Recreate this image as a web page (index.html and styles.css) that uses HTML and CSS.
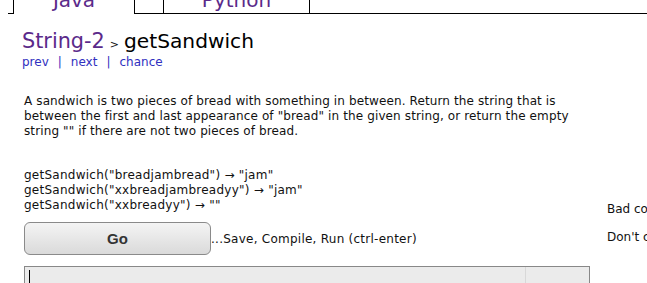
FILE: index.html
```html
<!DOCTYPE html>
<html>
<head>
<meta charset="utf-8">
<link rel="stylesheet" href="styles.css">
</head>
<body>
<div class="tabs">
  <div class="tab-edge"></div>
  <div class="tab active">Java</div>
  <div class="tab gap"></div>
  <div class="tab py">Python</div>
  <div class="tab rest"></div>
</div>
<div class="page">
  <div class="main">
    <div class="title"><span class="cat">String-2</span><span class="sep">&gt;</span><span class="name">getSandwich</span></div>
    <div class="nav"><a>prev</a><span class="bar">|</span><a>next</a><span class="bar">|</span><a>chance</a></div>
    <p class="desc">A sandwich is two pieces of bread with something in between. Return the string that is between the first and last appearance of "bread" in the given string, or return the empty string "" if there are not two pieces of bread.</p>
    <div class="examples">
      <div>getSandwich("breadjambread") → "jam"</div>
      <div>getSandwich("xxbreadjambreadyy") → "jam"</div>
      <div>getSandwich("xxbreadyy") → ""</div>
    </div>
    <div class="run">
      <button class="go">Go</button><span class="hint">...Save, Compile, Run (ctrl-enter)</span>
    </div>
    <div class="editor">
      <div class="code"><span class="cursor"></span></div>
      <div class="gutter"></div>
    </div>
  </div>
  <div class="side">
    <div class="side-line first">Bad code</div>
    <div class="side-line">Don't code</div>
  </div>
</div>
</body>
</html>
```
FILE: styles.css
```css
html, body {
  margin: 0;
  padding: 0;
  background: #fff;
  overflow: hidden;
}
body {
  font-family: "DejaVu Sans", Verdana, sans-serif;
  color: #111;
  width: 647px;
  height: 283px;
}
.tabs {
  display: flex;
  margin: -14px 0 0 8px;
  height: 28px;
}
.tab-edge {
  width: 5px;
  border-right: 1px solid #000;
  border-bottom: 1px solid #000;
}
.tab {
  font-size: 20px;
  color: #5b2a8a;
  text-align: center;
  line-height: 28px;
  box-sizing: border-box;
}
.tab.active {
  width: 120px;
}
.tab.gap {
  width: 30px;
  border-left: 1px solid #000;
  border-right: 1px solid #000;
  border-bottom: 1px solid #000;
}
.tab.py {
  width: 146px;
  border-right: 1px solid #000;
  border-bottom: 1px solid #000;
}
.tab.rest {
  flex: 1;
  border-bottom: 1px solid #000;
}
.page {
  display: flex;
}
.main {
  width: 566px;
  flex-shrink: 0;
  margin-left: 24px;
}
.title {
  margin: 17px 0 0 -2px;
  font-size: 20.8px;
  line-height: 20px;
  white-space: nowrap;
}
.cat {
  color: #5b2a8a;
}
.sep {
  font-size: 11px;
  color: #111;
  margin: 0 5px 0 5px;
}
.name {
  color: #000;
  font-size: 20.2px;
}
.nav {
  margin-left: -2px;
  font-size: 12px;
  line-height: 14px;
  color: #3030c0;
}
.nav a {
  color: #3030c0;
}
.nav .bar {
  margin: 0 9px;
}
.desc {
  margin: 25px 0 0 0;
  font-size: 12px;
  line-height: 15px;
  width: 548px;
  letter-spacing: 0.12px;
}
.examples {
  margin-top: 29px;
  font-size: 12px;
  line-height: 15px;
  letter-spacing: 0.25px;
}
.run {
  display: flex;
  align-items: center;
  margin-top: 9px;
}
.go {
  width: 187px;
  height: 33px;
  border: 1px solid #8a8a8a;
  border-radius: 6px;
  background: linear-gradient(#f4f4f4, #dadada);
  font-family: "Liberation Sans", Arial, sans-serif;
  font-weight: bold;
  font-size: 15px;
  color: #333;
  padding: 0;
}
.hint {
  font-size: 12px;
  letter-spacing: 0.25px;
}
.editor {
  margin-top: 11px;
  height: 30px;
  border: 1px solid #888;
  background: #ebebeb;
  display: flex;
  box-sizing: border-box;
}
.code {
  flex: 1;
  border-right: 1px solid #d8d8d8;
  padding: 3px 0 0 4px;
}
.cursor {
  display: block;
  width: 1px;
  height: 14px;
  background: #000;
}
.gutter {
  width: 63px;
}
.side {
  margin-left: 17px;
  padding-top: 188px;
  font-size: 12px;
  white-space: nowrap;
}
.side-line {
  line-height: 15px;
  margin-bottom: 13px;
}
```
